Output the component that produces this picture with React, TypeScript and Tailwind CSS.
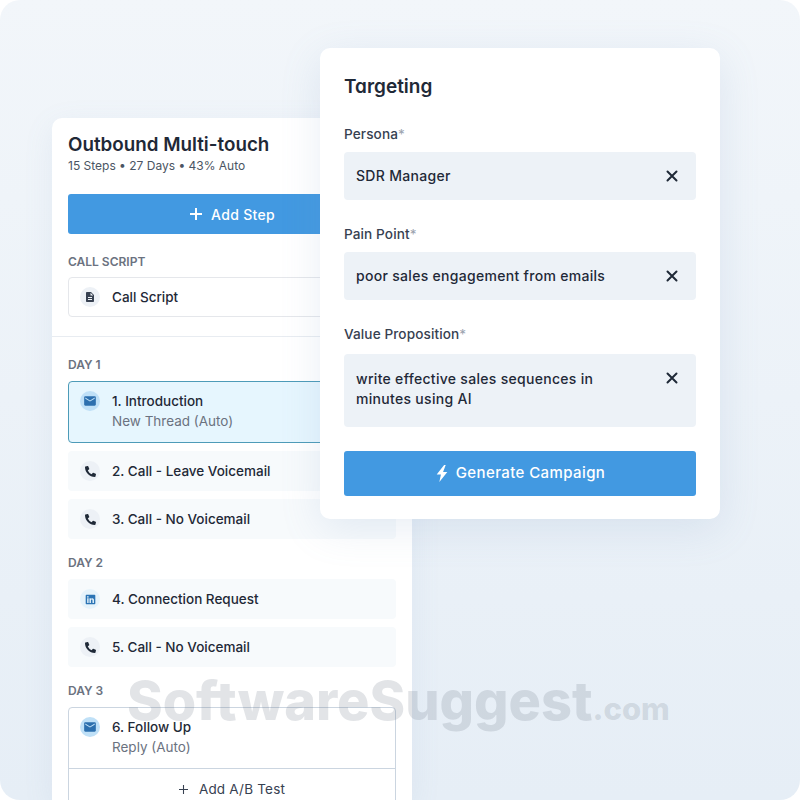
import React from "react";
import { FaPhoneAlt, FaLinkedin } from "react-icons/fa";
import { MdEmail, MdDescription } from "react-icons/md";

const Phone = () => <FaPhoneAlt className="w-[11px] h-[11px] text-[#1f2937]" />;
const Mail = () => <MdEmail className="w-[14px] h-[14px] text-[#2c6fae]" />;
const Doc = () => <MdDescription className="w-[12px] h-[12px] text-[#374151]" />;
const LinkedIn = () => <FaLinkedin className="w-[11px] h-[11px] text-[#2b74b5]" />;

const Close = () => (
  <svg viewBox="0 0 12 12" className="w-3 h-3 stroke-[#1f2937] stroke-[2] fill-none shrink-0" strokeLinecap="round">
    <path d="M1.500 1.500l9 9M10.500 1.500l-9 9" />
  </svg>
);

const IconDot = ({ tone, children }: { tone?: "blue" | "pale"; children: React.ReactNode }) => (
  <span
    className={`flex items-center justify-center w-5 h-5 rounded-full shrink-0 ${
      tone === "blue" ? "bg-[#bfe0f7]" : tone === "pale" ? "bg-[#e6f3fb]" : "bg-[#edf1f6]"
    }`}
  >
    {children}
  </span>
);

const DayLabel = ({ children, className = "" }: { children: React.ReactNode; className?: string }) => (
  <div className={`text-[12px] leading-4 font-semibold text-[#6b7280] ${className}`}>{children}</div>
);

const Step = ({ icon, title, className = "" }: { icon: React.ReactNode; title: string; className?: string }) => (
  <div className={`flex items-center gap-3 h-10 px-3 rounded-[4px] bg-[#f7fafc] ${className}`}>
    {icon}
    <span className="text-[13.500px] font-medium text-[#1f2937]">{title}</span>
  </div>
);

const Field = ({ label, value, tall }: { label: string; value: string; tall?: boolean }) => (
  <div>
    <div className="text-[13.600px] leading-[20px] font-medium text-[#374151] tracking-[0.1px]">
      {label}
      <span className="text-[#9ca3af] font-normal">*</span>
    </div>
    <div className={`flex justify-between rounded-[4px] bg-[#edf2f7] pl-3 pr-[18px] ${tall ? "mt-[10px] h-[73px] pt-[15px]" : "mt-2 h-[48px] items-center"}`}>
      <span className={`text-[14px] leading-[20px] font-medium text-[#1f2937] tracking-[0.3px] ${tall ? "w-[260px]" : ""}`}>{value}</span>
      <span className={tall ? "pt-[3px]" : ""}><Close /></span>
    </div>
  </div>
);

export default function App() {
  return (
    <div className="relative w-[800px] h-[800px] overflow-hidden rounded-[20px] bg-gradient-to-b from-[#f2f6fa] to-[#e6eef6] font-['Inter',sans-serif]">
      {/* Left card */}
      <div className="ml-[52px] mt-[118px] w-[360px] h-[682px] absolute rounded-t-[10px] bg-white pt-[17px] shadow-[0_8px_30px_rgba(120,150,190,0.1)]">
        <div className="px-4">
          <div className="text-[18.800px] leading-[20px] font-semibold text-[#1f2937]">Outbound Multi-touch</div>
          <div className="mt-px text-[12px] leading-[20px] text-[#4b5563]">15 Steps • 27 Days • 43% Auto</div>
          <div className="mt-[18px] h-10 rounded-[3px] bg-[#4299e1] flex items-center justify-center gap-2 text-white text-[14px] font-medium tracking-[0.3px]">
            <svg viewBox="0 0 14 14" className="w-[14px] h-[14px] stroke-white stroke-[2] fill-none"><path d="M7 1v12M1 7h12" /></svg>
            Add Step
          </div>
          <DayLabel className="mt-5">CALL SCRIPT</DayLabel>
          <div className="mt-[7px] h-10 flex items-center gap-3 px-[11px] rounded-[4px] border border-[#e5e7eb]">
            <IconDot><Doc /></IconDot>
            <span className="text-[13.500px] font-medium text-[#1f2937]">Call Script</span>
          </div>
        </div>
        <div className="mt-[19px] h-px bg-[#e8ecf1]" />
        <div className="px-4">
          <DayLabel className="mt-5">DAY 1</DayLabel>
          <div className="mt-2 h-[62px] flex gap-3 px-[11px] pt-[9px] rounded-[4px] border border-[#4d9bb8] bg-[#e6f6fe]">
            <IconDot tone="blue"><Mail /></IconDot>
            <div className="text-[13.500px] leading-[20px]">
              <div className="font-medium text-[#1f2937]">1. Introduction</div>
              <div className="text-[#6b7280]">New Thread (Auto)</div>
            </div>
          </div>
          <Step className="mt-2" icon={<IconDot><Phone /></IconDot>} title="2. Call - Leave Voicemail" />
          <Step className="mt-2" icon={<IconDot><Phone /></IconDot>} title="3. Call - No Voicemail" />
          <DayLabel className="mt-4">DAY 2</DayLabel>
          <Step className="mt-2" icon={<IconDot tone="pale"><LinkedIn /></IconDot>} title="4. Connection Request" />
          <Step className="mt-2" icon={<IconDot><Phone /></IconDot>} title="5. Call - No Voicemail" />
          <DayLabel className="mt-4">DAY 3</DayLabel>
          <div className="mt-2 h-[120px] rounded-t-[4px] border border-[#cbd5e0]">
            <div className="h-[61px] flex gap-3 px-[11px] pt-[9px] border-b border-[#cbd5e0]">
              <IconDot tone="blue"><Mail /></IconDot>
              <div className="text-[13.500px] leading-[20px]">
                <div className="font-medium text-[#1f2937]">6. Follow Up</div>
                <div className="text-[#6b7280]">Reply (Auto)</div>
              </div>
            </div>
            <div className="h-10 flex items-center justify-center gap-[11px] text-[13.500px] text-[#374151] tracking-[0.2px]">
              <svg viewBox="0 0 10 10" className="w-[9px] h-[9px] stroke-[#374151] stroke-[1.200] fill-none"><path d="M5 0v10M0 5h10" /></svg>
              Add A/B Test
            </div>
          </div>
        </div>
      </div>

      {/* Right card */}
      <div className="absolute left-[320px] top-[48px] w-[400px] h-[471px] rounded-[10px] bg-white px-6 pt-[25px] shadow-[0_10px_40px_rgba(120,150,190,0.16)]">
        <div className="text-[19px] leading-[28px] font-semibold text-[#1f2937] [font-feature-settings:'cv11']">Targeting</div>
        <div className="mt-[23px] flex flex-col gap-[24px]">
          <Field label="Persona" value="SDR Manager" />
          <Field label="Pain Point" value="poor sales engagement from emails" />
          <Field label="Value Proposition" value="write effective sales sequences in minutes using AI" tall />
        </div>
        <div className="mt-[24px] h-[45px] rounded-[3px] bg-[#4299e1] flex items-center justify-center gap-[7px] text-white text-[15px] font-medium tracking-[0.4px]">
          <svg viewBox="0 0 12 16" className="w-[14px] h-[17px] fill-white"><path d="M8 0 1 9h4l-1.500 7L11 6.500H7L9.500 0H8Z" /></svg>
          Generate Campaign
        </div>
      </div>

      {/* Watermark */}
      <div className="absolute left-[127px] top-[669px] flex items-baseline font-['Inter',sans-serif] font-extrabold text-[#6f7a88]/20 pointer-events-none whitespace-nowrap">
        <span className="text-[54px] leading-[64px]">SoftwareSuggest</span>
        <span className="text-[31px] leading-[64px]">.com</span>
      </div>
    </div>
  );
}
